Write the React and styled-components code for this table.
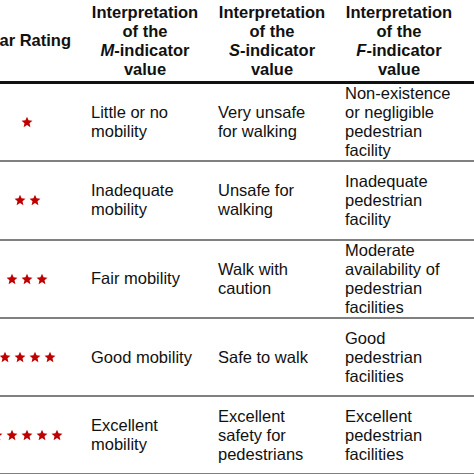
import React from 'react';
import styled, { createGlobalStyle } from 'styled-components';

const GlobalStyle = createGlobalStyle`
  html, body {
    margin: 0;
    padding: 0;
    background: #fff;
  }
`;

const Viewport = styled.div`
  width: 474px;
  height: 474px;
  overflow: hidden;
  background: #fff;
  font-family: 'Liberation Sans', Arial, sans-serif;
  color: #111;
`;

const Grid = styled.div`
  display: grid;
  grid-template-columns: 109px 127px 127px 127px 127px;
  margin-left: -27.5px;
  width: max-content;
`;

const HeadCell = styled.div`
  height: 81px;
  border-bottom: 3px solid #111;
  display: flex;
  align-items: center;
  justify-content: center;
  text-align: center;
  font-weight: bold;
  font-size: 16.5px;
  line-height: 19px;
  white-space: nowrap;
`;

const Cell = styled.div`
  height: 76.3px;
  border-bottom: 2px solid #808080;
  display: flex;
  align-items: center;
  justify-content: ${(p) => (p.$center ? 'center' : 'flex-start')};
  padding-left: ${(p) => (p.$center ? '0' : '9.5px')};
  font-size: 16.5px;
  line-height: 19px;
  white-space: nowrap;
`;

const Stars = styled.div`
  display: flex;
  gap: 3px;
`;

const StarIcon = styled.svg`
  width: 12px;
  height: 12px;
  fill: #c00000;
  display: block;
`;

const Star = () => (
  <StarIcon viewBox="0 0 24 24">
    <path d="M12 1.5l3.1 7.2 7.8.7-5.9 5.2 1.8 7.7L12 18.2l-6.8 4.1 1.8-7.7-5.9-5.2 7.8-.7z" />
  </StarIcon>
);

const Lines = ({ lines }) => (
  <div>
    {lines.map((l, i) => (
      <div key={i}>{l}</div>
    ))}
  </div>
);

const rows = [
  {
    stars: 1,
    m: ['Little or no', 'mobility'],
    s: ['Very unsafe', 'for walking'],
    f: ['Non-existence', 'or negligible', 'pedestrian', 'facility'],
  },
  {
    stars: 2,
    m: ['Inadequate', 'mobility'],
    s: ['Unsafe for', 'walking'],
    f: ['Inadequate', 'pedestrian', 'facility'],
  },
  {
    stars: 3,
    m: ['Fair mobility'],
    s: ['Walk with', 'caution'],
    f: ['Moderate', 'availability of', 'pedestrian', 'facilities'],
  },
  {
    stars: 4,
    m: ['Good mobility'],
    s: ['Safe to walk'],
    f: ['Good', 'pedestrian', 'facilities'],
  },
  {
    stars: 5,
    m: ['Excellent', 'mobility'],
    s: ['Excellent', 'safety for', 'pedestrians'],
    f: ['Excellent', 'pedestrian', 'facilities'],
  },
];

const Header = ({ letter }) => (
  <HeadCell>
    <div>
      Interpretation
      <br />
      of the
      <br />
      <i>{letter}</i>-indicator
      <br />
      value
    </div>
  </HeadCell>
);

function App() {
  return (
    <Viewport>
      <GlobalStyle />
      <Grid>
        <HeadCell>Star Rating</HeadCell>
        <Header letter="M" />
        <Header letter="S" />
        <Header letter="F" />
        <HeadCell />
        {rows.map((row, i) => (
          <React.Fragment key={i}>
            <Cell $center>
              <Stars>
                {Array.from({ length: row.stars }).map((_, j) => (
                  <Star key={j} />
                ))}
              </Stars>
            </Cell>
            <Cell>
              <Lines lines={row.m} />
            </Cell>
            <Cell>
              <Lines lines={row.s} />
            </Cell>
            <Cell>
              <Lines lines={row.f} />
            </Cell>
            <Cell />
          </React.Fragment>
        ))}
      </Grid>
    </Viewport>
  );
}

export default App;
